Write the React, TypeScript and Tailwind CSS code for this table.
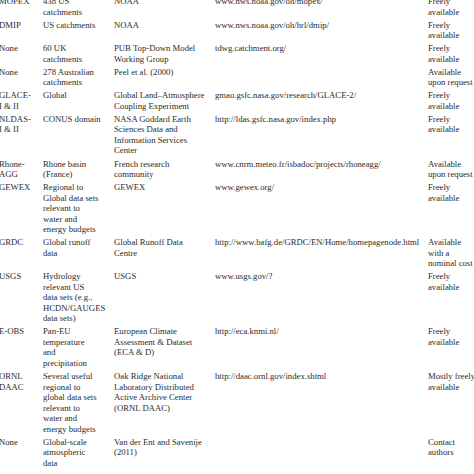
const rows: string[][][] = [
  [["MOPEX"], ["438 US", "catchments"], ["NOAA"], ["www.nws.noaa.gov/oh/mopex/"], ["Freely", "available"]],
  [["DMIP"], ["US catchments"], ["NOAA"], ["www.nws.noaa.gov/oh/hrl/dmip/"], ["Freely", "available"]],
  [["None"], ["60 UK", "catchments"], ["PUB Top-Down Model", "Working Group"], ["tdwg.catchment.org/"], ["Freely", "available"]],
  [["None"], ["278 Australian", "catchments"], ["Peel et al. (2000)"], [], ["Available", "upon request"]],
  [["GLACE-", "I & II"], ["Global"], ["Global Land–Atmosphere", "Coupling Experiment"], ["gmao.gsfc.nasa.gov/research/GLACE-2/"], ["Freely", "available"]],
  [
    ["NLDAS-", "I & II"],
    ["CONUS domain"],
    ["NASA Goddard Earth", "Sciences Data and", "Information Services", "Center"],
    ["http://ldas.gsfc.nasa.gov/index.php"],
    ["Freely", "available"],
  ],
  [["Rhone-", "AGG"], ["Rhone basin", "(France)"], ["French research", "community"], ["www.cnrm.meteo.fr/isbadoc/projects/rhoneagg/"], ["Available", "upon request"]],
  [
    ["GEWEX"],
    ["Regional to", "Global data sets", "relevant to", "water and", "energy budgets"],
    ["GEWEX"],
    ["www.gewex.org/"],
    ["Freely", "available"],
  ],
  [["GRDC"], ["Global runoff", "data"], ["Global Runoff Data", "Centre"], ["http://www.bafg.de/GRDC/EN/Home/homepagenode.html"], ["Available", "with a", "nominal cost"]],
  [
    ["USGS"],
    ["Hydrology", "relevant US", "data sets (e.g.,", "HCDN/GAUGES", "data sets)"],
    ["USGS"],
    ["www.usgs.gov/?"],
    ["Freely", "available"],
  ],
  [
    ["E-OBS"],
    ["Pan-EU", "temperature", "and", "precipitation"],
    ["European Climate", "Assessment & Dataset", "(ECA & D)"],
    ["http://eca.knmi.nl/"],
    ["Freely", "available"],
  ],
  [
    ["ORNL", "DAAC"],
    ["Several useful", "regional to", "global data sets", "relevant to", "water and", "energy budgets"],
    ["Oak Ridge National", "Laboratory Distributed", "Active Archive Center", "(ORNL DAAC)"],
    ["http://daac.ornl.gov/index.shtml"],
    ["Mostly freely", "available"],
  ],
  [["None"], ["Global-scale", "atmospheric", "data"], ["Van der Ent and Savenije", "(2011)"], [], ["Contact", "authors"]],
];

export default function App() {
  return (
    <div className="h-[474px] w-[474px] overflow-hidden bg-white text-[#2b2b2b]">
      <div
        className="-ml-[1px] -mt-[4px] grid grid-cols-[44px_71px_101px_213px_70px] gap-y-[2.6px] text-[8.7px] leading-[10.5px]"
        style={{ fontFamily: '"Liberation Serif", "Times New Roman", serif' }}
      >
        {rows.map((row, i) =>
          row.map((cell, j) => (
            <div key={`${i}-${j}`} className="whitespace-nowrap">
              {cell.map((line, k) => (
                <div key={k}>{line}</div>
              ))}
            </div>
          ))
        )}
      </div>
    </div>
  );
}
